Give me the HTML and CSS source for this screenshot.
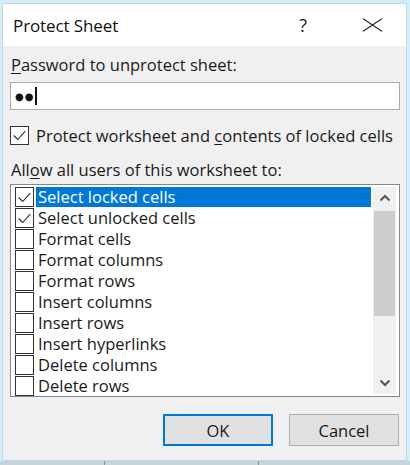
FILE: index.html
```html
<!DOCTYPE html>
<html>
<head>
<meta charset="utf-8">
<link rel="stylesheet" href="styles.css">
</head>
<body>
<div class="window">
  <div class="titlebar">
    <span class="title">Protect Sheet</span>
    <span class="help">?</span>
    <svg class="close" viewBox="0 0 22 22" preserveAspectRatio="none"><path d="M1 1 L21 21 M21 1 L1 21" stroke="#222" stroke-width="1.4" fill="none"/></svg>
  </div>
  <div class="content">
    <div class="label"><u>P</u>assword to unprotect sheet:</div>
    <div class="input"><span class="dots">●●</span><span class="caret"></span></div>
    <div class="check-row">
      <span class="cb checked"><svg viewBox="0 0 19 19" width="19" height="19"><path d="M3 9.5 L7.5 14 L16 4.5" stroke="#333" stroke-width="1.3" fill="none"/></svg></span>
      <span>Protect worksheet and <u>c</u>ontents of locked cells</span>
    </div>
    <div class="label allow">All<u>o</u>w all users of this worksheet to:</div>
    <div class="listbox">
      <div class="items">
        <div class="item selected"><span class="cb checked"><svg viewBox="0 0 19 19" width="19" height="19"><path d="M3 9.5 L7.5 14 L16 4.5" stroke="#333" stroke-width="1.3" fill="none"/></svg></span><span class="txt">Select locked cells</span></div>
        <div class="item"><span class="cb checked"><svg viewBox="0 0 19 19" width="19" height="19"><path d="M3 9.5 L7.5 14 L16 4.5" stroke="#333" stroke-width="1.3" fill="none"/></svg></span><span class="txt">Select unlocked cells</span></div>
        <div class="item"><span class="cb"></span><span class="txt">Format cells</span></div>
        <div class="item"><span class="cb"></span><span class="txt">Format columns</span></div>
        <div class="item"><span class="cb"></span><span class="txt">Format rows</span></div>
        <div class="item"><span class="cb"></span><span class="txt">Insert columns</span></div>
        <div class="item"><span class="cb"></span><span class="txt">Insert rows</span></div>
        <div class="item"><span class="cb"></span><span class="txt">Insert hyperlinks</span></div>
        <div class="item"><span class="cb"></span><span class="txt">Delete columns</span></div>
        <div class="item"><span class="cb"></span><span class="txt">Delete rows</span></div>
      </div>
      <div class="scrollbar">
        <div class="arrow"><svg width="12" height="8" viewBox="0 0 12 8"><path d="M1.5 6.5 L6 2 L10.5 6.5" stroke="#555" stroke-width="2" fill="none"/></svg></div>
        <div class="track"><div class="thumb"></div></div>
        <div class="arrow"><svg width="12" height="8" viewBox="0 0 12 8"><path d="M1.5 1.5 L6 6 L10.5 1.5" stroke="#555" stroke-width="2" fill="none"/></svg></div>
      </div>
    </div>
    <div class="buttons">
      <div class="btn default">OK</div>
      <div class="btn">Cancel</div>
    </div>
  </div>
</div>
<div class="taskbar">
  <div class="seg s1"></div>
  <div class="seg s2"></div>
  <div class="seg s3"></div>
</div>
</body>
</html>
```
FILE: styles.css
```css
html, body {
  margin: 0;
  padding: 0;
}
body {
  width: 410px;
  height: 465px;
  overflow: hidden;
  background: #d6ecf8;
  font-family: "Open Sans", "Noto Sans", sans-serif;
  color: #1a1a1a;
}
.window {
  margin: 4px 4px 0 3px;
  height: 456px;
  background: #f0f0f0;
  display: flex;
  flex-direction: column;
  box-shadow: 0 0 0 1px #b9dcf0;
}
.titlebar {
  height: 42px;
  background: #ffffff;
  display: flex;
  align-items: center;
  padding-left: 10px;
  flex-shrink: 0;
}
.title {
  font-size: 17px;
  flex: 1;
  letter-spacing: -0.1px;
  color: #111;
}
.help {
  font-size: 18px;
  margin-right: 55px;
  color: #222;
}
.close {
  margin-right: 23px;
  width: 21px;
  height: 14px;
}
.content {
  padding: 8px 6px 0 7px;
  display: flex;
  flex-direction: column;
  font-size: 16.5px;
}
.label {
  height: 22px;
  line-height: 22px;
  padding-left: 1px;
}
.label u { text-underline-offset: 2px; }
.input {
  margin-top: 6px;
  height: 26px;
  background: #fff;
  border: 1px solid #ababab;
  display: flex;
  align-items: center;
  padding-left: 4px;
}
.dots {
  font-size: 10px;
  letter-spacing: 1px;
  font-family: "DejaVu Sans", sans-serif;
  color: #111;
}
.caret {
  width: 1.5px;
  height: 18px;
  background: #111;
  margin-left: 1px;
}
.check-row {
  margin-top: 16px;
  display: flex;
  align-items: center;
  gap: 7px;
  height: 19px;
}
.check-row u { text-underline-offset: 2px; }
.cb {
  width: 17px;
  height: 17px;
  border: 1px solid #333;
  background: #fff;
  flex-shrink: 0;
  display: flex;
  align-items: center;
  justify-content: center;
}
.cb svg { width: 17px; height: 17px; }
.allow {
  margin-top: 14px;
}
.listbox {
  margin-top: 3px;
  height: 213px;
  background: #fff;
  border: 1px solid #828790;
  display: flex;
  padding: 2px 3px 0 4px;
  box-sizing: border-box;
}
.items {
  flex: 1;
  display: flex;
  flex-direction: column;
}
.item {
  height: 21px;
  display: flex;
  align-items: center;
}
.item .cb {
  height: 18px;
}
.item .txt {
  margin-left: 2px;
  height: 20px;
  line-height: 20px;
  padding: 0 3px 0 2px;
  flex: 1;
}
.item.selected .txt {
  background: #0078d7;
  color: #fff;
}
.scrollbar {
  width: 23px;
  margin-left: 2px;
  margin-bottom: 2px;
  display: flex;
  flex-direction: column;
  background: #f0f0f0;
}
.arrow {
  height: 22px;
  display: flex;
  align-items: center;
  justify-content: center;
  flex-shrink: 0;
}
.track {
  flex: 1;
  padding: 2px 1px 0;
}
.thumb {
  height: 105px;
  background: #cdcdcd;
}
.buttons {
  margin-top: 17px;
  display: flex;
  justify-content: flex-end;
  gap: 16px;
  padding-right: 1px;
}
.btn {
  width: 108px;
  height: 30px;
  border: 1px solid #adadad;
  background: #e1e1e1;
  display: flex;
  align-items: center;
  justify-content: center;
  font-size: 16.5px;
}
.btn.default {
  border: 2px solid #0078d7;
  width: 106px;
  height: 28px;
}
.taskbar {
  margin-top: 1px;
  height: 4px;
  display: flex;
  background: #c9d3da;
}
.seg { height: 100%; border-right: 1px solid #8a98a3; }
.s1 { width: 104px; }
.s2 { width: 153px; }
.s3 { flex: 1; border-right: none; }
```
